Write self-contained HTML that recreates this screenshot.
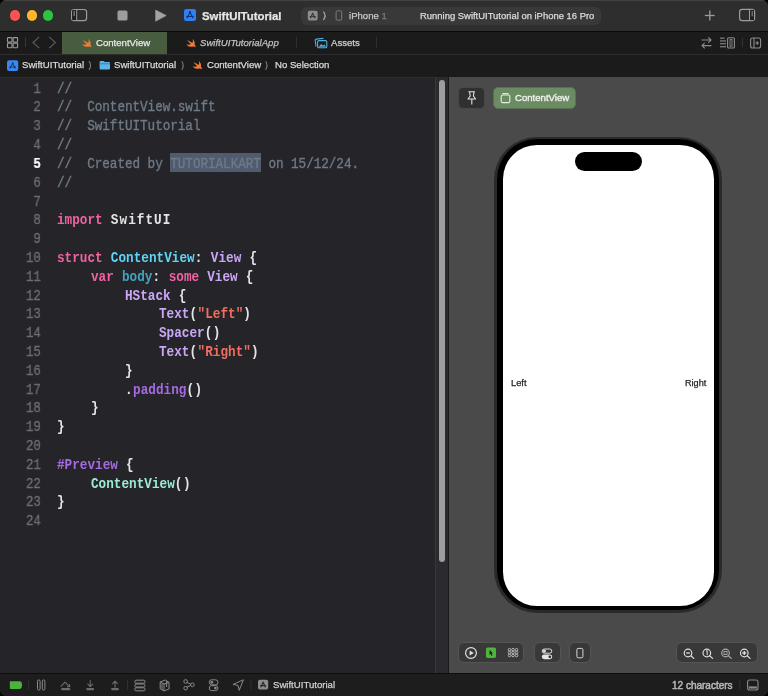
<!DOCTYPE html>
<html><head><meta charset="utf-8">
<style>
*{margin:0;padding:0;box-sizing:border-box}
html,body{width:768px;height:696px;overflow:hidden;background:#000}
body{position:relative;font-family:"Liberation Sans",sans-serif;}
.abs{position:absolute}
#win{position:absolute;left:0;top:0;width:768px;height:696px;border-radius:6px;overflow:hidden;background:#1f1f1f}
#title{left:0;top:0;width:768px;height:31px;background:#2e2e2f;border-top:1px solid #424243}
#tabs{left:0;top:31px;width:768px;height:23px;background:#1b1b1b;border-top:1px solid #0a0a0a}
#sep1{left:0;top:54px;width:768px;height:1px;background:#2e2e2e}
#crumbs{left:0;top:55px;width:768px;height:22px;background:#1b1b1b}
#editor{left:0;top:77px;width:435px;height:596px;background:#252529;border-top:1px solid #2e2e32}
#track{left:435px;top:77px;width:13px;height:596px;background:#2b2b2f;border-left:1px solid #38383c}
#thumb{left:439px;top:80px;width:6px;height:482px;background:#9d9d9f;border-radius:3px}
#vline{left:448px;top:77px;width:1px;height:596px;background:#1a1a1a}
#canvas{left:449px;top:77px;width:319px;height:596px;background:#4a4a4a}
#status{left:0;top:673px;width:768px;height:23px;background:#1d1d1d;border-top:1px solid #0e0e0e}
#code{position:absolute;left:0;top:0;width:768px;height:696px;will-change:transform}
.ui{font-size:9.6px;color:#d8d8d8;white-space:nowrap;line-height:12px;-webkit-text-stroke:0.25px currentColor;will-change:transform}
.code{font-weight:bold;position:absolute;font-family:"Liberation Mono",monospace;font-size:14px;line-height:14px;white-space:pre;transform-origin:0 0;transform:scaleX(0.905);color:#dfdfe0}
.p{font-weight:bold;color:#e4e4e6}
.ln{position:absolute;left:1.4px;font-family:"Liberation Mono",monospace;font-size:14px;line-height:14px;white-space:pre;color:#6e6e72;text-align:right;width:40px;-webkit-text-stroke:0.3px #6e6e72;will-change:transform;transform-origin:100% 0;transform:scaleX(0.905)}
.chl{background:#515b70;color:#6c7986}
.code span.c,.code span.chl{font-weight:normal;-webkit-text-stroke:0.35px #6c7986}/*GEN*/.code span{letter-spacing:0.018px}
.code span.p{letter-spacing:0.549px}
.code span.c,.code span.chl{letter-spacing:-0.059px}
.code span.pb{font-weight:bold;color:#e4e4e6;letter-spacing:1.157px}
/*ENDGEN*/.cur{color:#fff;font-weight:bold;-webkit-text-stroke:0.2px #fff}
.k{color:#f062a3}.s{color:#f26c5f}.t{color:#cba6f6}.td{color:#5fd4f8}.od{color:#44a2c0}.f{color:#a56ae3}.pc{color:#9ce9d5}.c{color:#6f7b88}
</style></head><body>
<div id="win">
<div id="title" class="abs"></div>
<div id="tabs" class="abs"></div>
<div id="sep1" class="abs"></div>
<div id="crumbs" class="abs"></div>
<div id="editor" class="abs"></div>
<div id="track" class="abs"></div>
<div id="thumb" class="abs"></div>
<div id="vline" class="abs"></div>
<div id="canvas" class="abs"></div>
<div id="status" class="abs"></div>

<!-- traffic lights -->
<div class="abs" style="left:10.3px;top:10.4px;width:10.2px;height:10.2px;border-radius:50%;background:#fb5350"></div>
<div class="abs" style="left:26.7px;top:10.4px;width:10.2px;height:10.2px;border-radius:50%;background:#fdb52c"></div>
<div class="abs" style="left:43px;top:10.4px;width:10.2px;height:10.2px;border-radius:50%;background:#2bc63e"></div>

<!-- title bar text -->
<div class="abs ui" style="left:202px;top:8.5px;font-size:11.4px;font-weight:bold;color:#e6e6e6;line-height:14px">SwiftUITutorial</div>
<div class="abs" style="left:301px;top:6.5px;width:300px;height:18px;border-radius:6px;background:#393939"></div>
<div class="abs ui" style="left:348.5px;top:9.5px;color:#c8c8c8">iPhone <span style="color:#7a7a7a;-webkit-text-stroke:0.25px #7a7a7a">1</span></div>
<div class="abs ui" style="left:419.5px;top:9.8px;color:#dcdcdc;font-size:9.45px">Running SwiftUITutorial on iPhone 16 Pro</div>

<!-- tabs -->
<div class="abs" style="left:62px;top:32px;width:105px;height:22px;background:#485c3f"></div>
<div class="abs ui" style="left:96px;top:37px;color:#e8e8e8">ContentView</div>
<div class="abs ui" style="left:200px;top:37px;font-style:italic;color:#c2c2c2">SwiftUITutorialApp</div>
<div class="abs ui" style="left:330.5px;top:37px;color:#d2d2d2">Assets</div>
<div class="abs" style="left:296px;top:37px;width:1px;height:11px;background:#333"></div>
<div class="abs" style="left:376px;top:37px;width:1px;height:11px;background:#333"></div>

<!-- breadcrumbs -->
<div class="abs ui" style="left:22.3px;top:58.9px;color:#dadada">SwiftUITutorial</div>
<div class="abs ui" style="left:114px;top:58.9px;color:#dadada">SwiftUITutorial</div>
<div class="abs ui" style="left:207px;top:58.9px;color:#dadada">ContentView</div>
<div class="abs ui" style="left:275px;top:58.9px;color:#dadada">No Selection</div>

<!-- preview canvas top -->
<div class="abs" style="left:458px;top:87px;width:27px;height:22px;border-radius:5px;background:#303030;border:1px solid #474747"></div>
<div class="abs" style="left:493px;top:87px;width:83px;height:22px;border-radius:5px;background:#6b8c63;border:1px solid #5a6f55"></div>
<div class="abs ui" style="left:515px;top:92px;color:#eef2ec;-webkit-text-stroke:0.35px #eef2ec">ContentView</div>

<!-- phone -->
<div class="abs" style="left:493.6px;top:136.5px;width:228.8px;height:476.6px;border-radius:43px;background:#2a2a2a"></div>
<div class="abs" style="left:496.8px;top:139.2px;width:222.4px;height:471px;border-radius:40px;background:#000"></div>
<div class="abs" style="left:502.6px;top:144.7px;width:211.2px;height:461.1px;border-radius:34px;background:#fff"></div>
<div class="abs" style="left:575px;top:151.6px;width:66.6px;height:19.7px;border-radius:9.85px;background:#000"></div>
<div class="abs ui" style="left:511px;top:377.2px;color:#222;font-size:9.3px">Left</div>
<div class="abs ui" style="left:684.6px;top:377.2px;color:#222;font-size:9.1px">Right</div>

<!-- canvas bottom toolbar -->
<div class="abs" style="left:458px;top:642px;width:66px;height:21px;border-radius:6px;background:#383838;border:1px solid #555555"></div>
<div class="abs" style="left:534px;top:642px;width:27px;height:21px;border-radius:6px;background:#383838;border:1px solid #555555"></div>
<div class="abs" style="left:568.5px;top:642px;width:22px;height:21px;border-radius:6px;background:#383838;border:1px solid #555555"></div>
<div class="abs" style="left:676px;top:642px;width:82px;height:21px;border-radius:6px;background:#383838;border:1px solid #555555"></div>

<!-- status bar -->
<div class="abs ui" style="left:273px;top:679px;color:#d0d0d0">SwiftUITutorial</div>
<div class="abs ui" style="left:672px;top:679.8px;color:#b8b8b8;font-size:10px;-webkit-text-stroke:0.5px #b8b8b8">12 characters</div>

<!-- CODE -->
<svg id="icons" class="abs" style="left:0;top:0" width="768" height="696" viewBox="0 0 768 696">
<!-- title bar: sidebar icon -->
<g fill="none" stroke="#9c9c9c" stroke-width="1.2">
<rect x="71.6" y="9.5" width="15" height="11.2" rx="2.6"/>
<line x1="76.6" y1="9.5" x2="76.6" y2="20.7"/>
</g>
<rect x="72.2" y="10.1" width="4" height="10" fill="#1f1f1f"/>
<rect x="73.4" y="11" width="1.6" height="5" fill="#6a6a6a"/>
<!-- stop / play -->
<rect x="117.5" y="10.5" width="10" height="10" rx="1.6" fill="#9d9d9d"/>
<path d="M155.6,10 L166.2,15.6 L155.6,21.2 Z" fill="#a2a2a2" stroke="#a2a2a2" stroke-width="0.6" stroke-linejoin="round"/>
<!-- app icon blue -->
<rect x="184" y="8.9" width="12" height="12" rx="2.2" fill="#2f7ff2"/>
<g stroke="#0f2d66" stroke-width="1" fill="none" stroke-linecap="round"><path d="M190,12 L187.2,18 M190,12 L192.8,18 M186.6,16.4 L193.4,16.4"/></g><circle cx="190" cy="12.2" r="1" fill="#0f2d66"/>
<!-- scheme pill icons -->
<rect x="307.8" y="10.8" width="9.8" height="9.8" rx="1.8" fill="#8e8e8e"/>
<g stroke="#3a3a3a" stroke-width="1.1" fill="none" stroke-linecap="round"><path d="M312.7,13 L310.6,18 M312.7,13 L314.8,18 M310.1,16.6 L315.3,16.6"/></g>
<path d="M323.4,11.6 Q326.8,15.6 323.4,19.8" fill="none" stroke="#a8a8a8" stroke-width="1.3"/>
<rect x="336.1" y="10.9" width="5.6" height="9.3" rx="1.3" fill="none" stroke="#7c7c7c" stroke-width="1"/>
<!-- plus -->
<g stroke="#9c9c9c" stroke-width="1.3"><line x1="704.9" y1="15.5" x2="714.7" y2="15.5"/><line x1="709.8" y1="10.6" x2="709.8" y2="20.4"/></g>
<!-- inspector icon -->
<g fill="none" stroke="#9c9c9c" stroke-width="1.2">
<rect x="739.6" y="9.3" width="15" height="11.4" rx="2.6"/>
<line x1="749.6" y1="9.3" x2="749.6" y2="20.7"/>
</g>
<rect x="750.2" y="9.9" width="3.8" height="10.2" fill="#1f1f1f"/>
<rect x="751.5" y="11" width="1.6" height="5.4" fill="#6a6a6a"/>

<!-- tab bar -->
<g fill="none" stroke="#9a9a9a" stroke-width="1.1">
<rect x="7.5" y="37.6" width="4.5" height="4.5" rx="0.7"/>
<rect x="13.1" y="37.6" width="4.5" height="4.5" rx="0.7"/>
<rect x="7.5" y="43.2" width="4.5" height="4.5" rx="0.7"/>
<rect x="13.1" y="43.2" width="4.5" height="4.5" rx="0.7"/>
</g>
<rect x="25" y="37.7" width="1" height="9.4" fill="#3a3a3a"/>
<g fill="none" stroke="#5e5e5e" stroke-width="1.1"><path d="M39.2,36.8 L33,42.5 L39.2,48.2"/><path d="M49.2,36.8 L55.4,42.5 L49.2,48.2"/></g>
<path transform="translate(82 39)" d="M0.1,5.3 Q2.4,8.4 5.6,7.7 Q7.9,7.3 9.8,8.1 Q9.1,6.8 8.5,5.8 Q8.9,2.6 6.5,-0.2 Q7.1,2.4 6.2,4.0 Q3.8,2.4 0.9,0.9 Q2.7,3.6 4.8,5.2 Q2.5,6.0 0.1,5.3 Z" fill="#f57a36"/>
<path transform="translate(186.2 39)" d="M0.1,5.3 Q2.4,8.4 5.6,7.7 Q7.9,7.3 9.8,8.1 Q9.1,6.8 8.5,5.8 Q8.9,2.6 6.5,-0.2 Q7.1,2.4 6.2,4.0 Q3.8,2.4 0.9,0.9 Q2.7,3.6 4.8,5.2 Q2.5,6.0 0.1,5.3 Z" fill="#f57a36"/>
<!-- assets icon -->
<g fill="none" stroke="#4fb0e2" stroke-width="1.1">
<path d="M316,46.5 L315.2,40.5 Q315.1,39.3 316.3,39.1 L323.5,38.3"/>
<rect x="317.6" y="40.6" width="9.2" height="7.2" rx="1.4"/>
</g>
<path d="M318.6,46.8 L321.2,44 L323,45.6 L324.4,44.4 L326,46.8 Z" fill="#4fb0e2"/>
<rect x="296" y="37.5" width="1" height="10" fill="#2e2e2e"/>
<rect x="376" y="37.5" width="1" height="10" fill="#2e2e2e"/>
<!-- tab bar right icons -->
<g fill="none" stroke="#8c8c8c" stroke-width="1.1" stroke-linecap="round" stroke-linejoin="round">
<path d="M702,40 L711,40 M708.6,37.6 L711,40 L708.6,42.4"/>
<path d="M711,45.6 L702,45.6 M704.4,43.2 L702,45.6 L704.4,48"/>
</g>
<g fill="#8c8c8c">
<rect x="720" y="37.6" width="4.6" height="1.1"/><rect x="720" y="40.4" width="6" height="1.1"/><rect x="720" y="43.2" width="6" height="1.1"/><rect x="720" y="46.2" width="6" height="1.1"/>
</g>
<rect x="727.6" y="37.8" width="6.8" height="10.2" rx="1" fill="none" stroke="#8c8c8c" stroke-width="1.1"/>
<rect x="730" y="39.6" width="2" height="6.6" fill="none" stroke="#8c8c8c" stroke-width="0.9"/>
<rect x="742" y="37.8" width="1" height="9" fill="#333"/>
<g fill="none" stroke="#8c8c8c" stroke-width="1.1">
<rect x="750.6" y="38" width="10" height="10" rx="2"/>
<line x1="754" y1="38" x2="754" y2="48"/>
</g>
<path d="M757.2,41.2 L757.2,44.8 M755.4,43 L759,43" stroke="#8c8c8c" stroke-width="1.2"/>

<!-- breadcrumbs -->
<rect x="7" y="60.2" width="11.2" height="10.8" rx="2" fill="#3a87f2"/>
<g stroke="#14305e" stroke-width="0.9" fill="none" stroke-linecap="round"><path d="M12.6,63.2 L10,68.4 M12.6,63.2 L15.2,68.4 M9.6,67 L15.6,67"/></g><circle cx="12.6" cy="63.4" r="0.9" fill="#14305e"/>
<g fill="none" stroke="#7a7a7a" stroke-width="1.1">
<path d="M89,61.2 Q92.2,65.5 89,69.8"/>
<path d="M181.8,61.2 Q184.6,65.5 181.8,69.8"/>
<path d="M265.6,61.2 Q268.4,65.5 265.6,69.8"/>
</g>
<path d="M99.6,62.2 Q99.6,61 100.8,61 L103.6,61 L104.8,62 L108.9,62 Q110,62 110,63.2 L110,68.6 Q110,69.6 108.9,69.6 L100.7,69.6 Q99.6,69.6 99.6,68.6 Z" fill="#5ab6e8"/>
<rect x="99.6" y="63.3" width="10.4" height="1" fill="#3f7fa6"/>
<path transform="translate(192.5 61)" d="M0.1,5.3 Q2.4,8.4 5.6,7.7 Q7.9,7.3 9.8,8.1 Q9.1,6.8 8.5,5.8 Q8.9,2.6 6.5,-0.2 Q7.1,2.4 6.2,4.0 Q3.8,2.4 0.9,0.9 Q2.7,3.6 4.8,5.2 Q2.5,6.0 0.1,5.3 Z" fill="#f57a36"/>

<!-- canvas top icons -->
<g fill="none" stroke="#e0e0e0" stroke-width="1.1" stroke-linejoin="round">
<path d="M468.4,91.8 L475,91.8 M469.6,91.8 L470.2,96 L468,99 L475.6,99 L473.4,96 L474,91.8"/>
<path d="M471.8,99 L471.8,104.4"/>
</g>
<g fill="none" stroke="#e6ece4" stroke-width="1.1">
<rect x="501.2" y="95" width="8.6" height="7.6" rx="1.4"/>
<path d="M502.4,93.6 L508.6,93.6"/>
</g>

<!-- canvas bottom icons -->
<circle cx="471" cy="653" r="5.4" fill="none" stroke="#e2e2e2" stroke-width="1.2"/>
<path d="M469.6,650.4 L473.8,653 L469.6,655.6 Z" fill="#e2e2e2"/>
<rect x="486" y="647.6" width="10" height="10.3" rx="1.6" fill="#4fb43d"/>
<path d="M489.6,649.8 L489.6,655 L490.7,654.1 L491.6,655.9 L492.4,655.5 L491.5,653.8 L492.9,653.6 Z" fill="#1a1a1a"/>
<g fill="none" stroke="#cfcfcf" stroke-width="0.8"><circle cx="509.5" cy="649.7" r="1.3"/><circle cx="513" cy="649.7" r="1.3"/><circle cx="516.5" cy="649.7" r="1.3"/><circle cx="509.5" cy="652.6" r="1.3"/><circle cx="513" cy="652.6" r="1.3"/><circle cx="516.5" cy="652.6" r="1.3"/><circle cx="509.5" cy="655.5" r="1.3"/><circle cx="513" cy="655.5" r="1.3"/><circle cx="516.5" cy="655.5" r="1.3"/></g>
<!-- toggles -->
<rect x="542.2" y="649" width="9.6" height="4.2" rx="2.1" fill="none" stroke="#dcdcdc" stroke-width="1"/>
<circle cx="544.4" cy="651.1" r="1.6" fill="#dcdcdc"/>
<rect x="541.8" y="654.4" width="10.4" height="4.8" rx="2.4" fill="#e6e6e6"/>
<circle cx="549.8" cy="656.8" r="1.4" fill="#333"/>
<!-- phone -->
<rect x="576.9" y="648.4" width="6" height="9.4" rx="1.2" fill="none" stroke="#d6d6d6" stroke-width="1"/>
<!-- magnifiers -->
<g fill="none" stroke="#dedede" stroke-width="1.2" stroke-linecap="round">
<circle cx="688" cy="653" r="3.8"/><path d="M690.8,655.8 L693.8,658.4"/>
<circle cx="706.8" cy="653" r="3.8"/><path d="M709.6,655.8 L712.6,658.4"/>
<circle cx="744.3" cy="653" r="3.8"/><path d="M747.1,655.8 L750.1,658.4"/>
</g>
<g fill="none" stroke="#a8a8a8" stroke-width="1.2" stroke-linecap="round">
<circle cx="725.5" cy="653" r="3.8"/><path d="M728.3,655.8 L731.3,658.4"/>
</g>
<path d="M686.2,653 L689.8,653" stroke="#dedede" stroke-width="1.3"/>
<path d="M706,651.2 L707.2,650.6 L707.2,655.2" stroke="#dedede" stroke-width="1" fill="none"/>
<rect x="724" y="651.5" width="3" height="3" fill="none" stroke="#a8a8a8" stroke-width="0.9"/>
<path d="M742.4,653 L746.2,653 M744.3,651.1 L744.3,654.9" stroke="#dedede" stroke-width="1.3"/>

<!-- status bar -->
<path d="M10,681.2 L19.6,681.2 Q20.6,681.2 21.4,682.2 L22.2,685.1 L21.4,688 Q20.6,689 19.6,689 L10.8,689 Q9.8,689 9.8,688 L9.8,682.2 Q9.8,681.2 10,681.2 Z" fill="#4bb33b"/>
<rect x="28.2" y="680.3" width="0.9" height="9.4" fill="#333"/>
<g fill="none" stroke="#8a8a8a" stroke-width="1">
<rect x="37.5" y="679.9" width="2.6" height="10.2" rx="1.3"/>
<rect x="42.3" y="679.9" width="2.6" height="10.2" rx="1.3"/>
</g>
<g fill="none" stroke="#6c6c6c" stroke-width="1.1" stroke-linecap="round" stroke-linejoin="round">
<path d="M61,686.4 L65,682.2 L69.4,686.6 M69.6,684.6 L69.6,686.8 L67.4,686.8"/>
<path d="M90.2,680.6 L90.2,686.4 M87.8,684.2 L90.2,686.6 L92.6,684.2"/>
<path d="M115,687.2 L115,681.2 M112.6,683.6 L115,681.2 L117.4,683.6"/>
</g>
<g fill="#6c6c6c"><rect x="61.2" y="688" width="9" height="2.2" rx="0.8"/><rect x="86.4" y="688" width="7.6" height="2.2" rx="0.8"/><rect x="111.2" y="688" width="7.6" height="2.2" rx="0.8"/></g>
<rect x="127" y="680.3" width="0.9" height="9.4" fill="#333"/>
<g fill="none" stroke="#8a8a8a" stroke-width="1">
<rect x="134.8" y="680.2" width="10.2" height="3" rx="1.2"/>
<rect x="134.8" y="684" width="10.2" height="3" rx="1.2"/>
<rect x="134.8" y="687.8" width="10.2" height="3" rx="1.2"/>
</g>
<g fill="none" stroke="#8a8a8a" stroke-width="1" stroke-linejoin="round">
<path d="M160.2,682 L165.2,680 L169,682.4 L169,689 L164,691 L160.2,688.8 Z M164,684 L164,691 M160.2,682 L164,684 L169,682.4"/>
<path d="M162,683.6 L162,689.6 M166.6,681 L166.6,687"/>
</g>
<g fill="none" stroke="#8a8a8a" stroke-width="1">
<circle cx="185.6" cy="681.4" r="1.8"/><circle cx="185.6" cy="688.2" r="1.8"/><circle cx="192.4" cy="684.8" r="1.8"/>
<path d="M187,682.5 L190.8,684.2 M187,687.1 L190.8,685.4"/>
</g>
<g fill="none" stroke="#8a8a8a" stroke-width="1">
<rect x="209.2" y="679.8" width="8.8" height="5" rx="2.5"/>
<rect x="209.2" y="685.6" width="8.8" height="5" rx="2.5"/>
</g>
<circle cx="211.8" cy="682.3" r="1.4" fill="#8a8a8a"/><circle cx="215.4" cy="688.1" r="1.4" fill="#8a8a8a"/>
<path d="M243.4,679.8 L233,684.4 L238,685.4 L239.2,690.4 Z" fill="none" stroke="#8a8a8a" stroke-width="1" stroke-linejoin="round"/>
<rect x="250.4" y="680.3" width="0.9" height="9.4" fill="#333"/>
<rect x="258" y="679.8" width="10.2" height="9.8" rx="1.8" fill="#8c8c8c"/>
<g stroke="#2a2a2a" stroke-width="1.1" fill="none" stroke-linecap="round"><path d="M263.1,682 L261,687 M263.1,682 L265.2,687 M260.5,685.6 L265.7,685.6"/></g>
<rect x="739.4" y="680" width="0.9" height="9.4" fill="#333"/>
<rect x="747.6" y="680" width="10.4" height="10" rx="2" fill="none" stroke="#8a8a8a" stroke-width="1.1"/>
<rect x="748.8" y="686.4" width="8" height="2.2" fill="#8a8a8a"/>
</svg>
<div id="hlbox" class="abs" style="left:170.2px;top:153.4px;width:90.6px;height:18.5px;background:#515b70"></div>
<div id="code">
<div class="ln" style="top:81.67px">1</div>
<div class="code" style="left:57.00px;top:81.67px"><span class="c">//</span></div>
<div class="ln" style="top:100.48px">2</div>
<div class="code" style="left:57.00px;top:100.48px"><span class="c">//  ContentView.swift</span></div>
<div class="ln" style="top:119.29px">3</div>
<div class="code" style="left:57.00px;top:119.29px"><span class="c">//  SwiftUITutorial</span></div>
<div class="ln" style="top:138.10px">4</div>
<div class="code" style="left:57.00px;top:138.10px"><span class="c">//</span></div>
<div class="ln cur" style="top:156.91px">5</div>
<div class="code" style="left:57.00px;top:156.91px"><span class="c">//  Created by </span><span class="c">TUTORIALKART</span><span class="c"> on 15/12/24.</span></div>
<div class="ln" style="top:175.72px">6</div>
<div class="code" style="left:57.00px;top:175.72px"><span class="c">//</span></div>
<div class="ln" style="top:194.53px">7</div>
<div class="ln" style="top:213.34px">8</div>
<div class="code" style="left:57.00px;top:213.34px"><span class="k">import</span><span class="p"> </span><span class="pb">SwiftUI</span></div>
<div class="ln" style="top:232.15px">9</div>
<div class="ln" style="top:250.96px">10</div>
<div class="code" style="left:57.00px;top:250.96px"><span class="k">struct</span><span class="p"> </span><span class="td">ContentView</span><span class="p">: </span><span class="t">View</span><span class="p"> {</span></div>
<div class="ln" style="top:269.77px">11</div>
<div class="code" style="left:91.10px;top:269.77px"><span class="k">var</span><span class="p"> </span><span class="od">body</span><span class="p">: </span><span class="k">some</span><span class="p"> </span><span class="t">View</span><span class="p"> {</span></div>
<div class="ln" style="top:288.58px">12</div>
<div class="code" style="left:125.20px;top:288.58px"><span class="t">HStack</span><span class="p"> {</span></div>
<div class="ln" style="top:307.39px">13</div>
<div class="code" style="left:159.30px;top:307.39px"><span class="t">Text</span><span class="p">(</span><span class="s">&quot;Left&quot;</span><span class="p">)</span></div>
<div class="ln" style="top:326.20px">14</div>
<div class="code" style="left:159.30px;top:326.20px"><span class="t">Spacer</span><span class="p">()</span></div>
<div class="ln" style="top:345.01px">15</div>
<div class="code" style="left:159.30px;top:345.01px"><span class="t">Text</span><span class="p">(</span><span class="s">&quot;Right&quot;</span><span class="p">)</span></div>
<div class="ln" style="top:363.82px">16</div>
<div class="code" style="left:125.20px;top:363.82px"><span class="p">}</span></div>
<div class="ln" style="top:382.63px">17</div>
<div class="code" style="left:125.20px;top:382.63px"><span class="p">.</span><span class="f">padding</span><span class="p">()</span></div>
<div class="ln" style="top:401.44px">18</div>
<div class="code" style="left:91.10px;top:401.44px"><span class="p">}</span></div>
<div class="ln" style="top:420.25px">19</div>
<div class="code" style="left:57.00px;top:420.25px"><span class="p">}</span></div>
<div class="ln" style="top:439.06px">20</div>
<div class="ln" style="top:457.87px">21</div>
<div class="code" style="left:57.00px;top:457.87px"><span class="f">#Preview</span><span class="p"> {</span></div>
<div class="ln" style="top:476.68px">22</div>
<div class="code" style="left:91.10px;top:476.68px"><span class="pc">ContentView</span><span class="p">()</span></div>
<div class="ln" style="top:495.49px">23</div>
<div class="code" style="left:57.00px;top:495.49px"><span class="p">}</span></div>
<div class="ln" style="top:514.30px">24</div>
</div>
</div>
</body></html>
